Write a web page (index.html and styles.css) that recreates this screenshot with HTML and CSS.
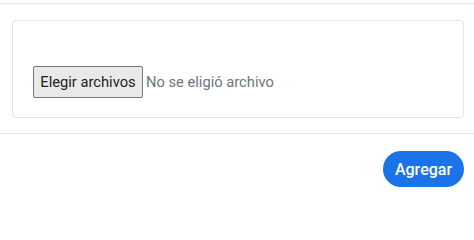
FILE: index.html
```html
<!DOCTYPE html>
<html lang="es">
<head>
<meta charset="utf-8">
<link rel="stylesheet" href="styles.css">
</head>
<body>
<div class="top-rule"></div>
<div class="card">
  <div class="file-row">
    <span class="file-btn">Elegir archivos</span>
    <span class="file-name">No se eligió archivo</span>
  </div>
</div>
<div class="footer">
  <button class="btn-add">Agregar</button>
</div>
</body>
</html>
```
FILE: styles.css
```css
html, body {
  margin: 0;
  padding: 0;
  background: #ffffff;
  font-family: Roboto, "Liberation Sans", sans-serif;
}
.top-rule {
  height: 3px;
  border-bottom: 1px solid #e6e6e6;
}
.card {
  margin: 16px 10px 0 12px;
  height: 98px;
  box-sizing: border-box;
  border: 1px solid #e3e3e3;
  border-radius: 4px;
  padding: 45px 0 0 20px;
}
.file-row {
  display: flex;
  align-items: center;
  gap: 3px;
}
.file-btn {
  box-sizing: border-box;
  height: 32px;
  width: 110px;
  display: flex;
  align-items: center;
  justify-content: center;
  background: #e9e9e9;
  border: 1px solid #777777;
  border-radius: 2px;
  color: #222222;
  font-size: 14.7px;
}
.file-name {
  color: #6c757d;
  font-size: 14.7px;
}
.footer {
  margin-top: 15px;
  border-top: 1px solid #e6e6e6;
  display: flex;
  justify-content: flex-end;
  padding: 17px 10px 0 0;
}
.btn-add {
  height: 36px;
  width: 81px;
  border: none;
  border-radius: 18px;
  background: #1a73e8;
  color: #ffffff;
  font-family: Roboto, "Liberation Sans", sans-serif;
  font-size: 16px;
  font-weight: 500;
  padding: 0;
}
```
